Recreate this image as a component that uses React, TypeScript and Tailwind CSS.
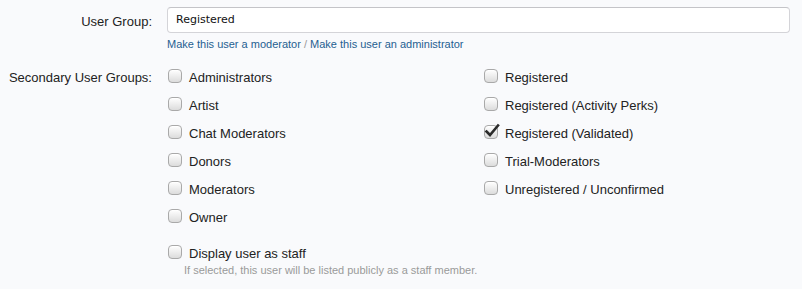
const leftGroups = ['Administrators', 'Artist', 'Chat Moderators', 'Donors', 'Moderators', 'Owner']
const rightGroups = [
  { name: 'Registered', checked: false },
  { name: 'Registered (Activity Perks)', checked: false },
  { name: 'Registered (Validated)', checked: true },
  { name: 'Trial-Moderators', checked: false },
  { name: 'Unregistered / Unconfirmed', checked: false },
]

const Box = ({ checked = false }: { checked?: boolean }) => (
  <span className="relative inline-block w-[14px] h-[14px] shrink-0 -mt-[3px] rounded-[4px] border border-[#a9a9a9] bg-gradient-to-b from-white to-[#dcdcdc] shadow-[inset_0_1px_0_#fff]">
    {checked && (
      <svg className="absolute -left-[1px] -top-[3px]" width="16" height="16" viewBox="0 0 16 16">
        <path d="M2.5 8.5 L6 12 L14 2.5" fill="none" stroke="#2b2b2b" strokeWidth="2.6" strokeLinecap="square" />
      </svg>
    )}
  </span>
)

const Check = ({ label, checked = false }: { label: string; checked?: boolean }) => (
  <label className="flex items-center h-[28px] gap-[7px] text-[13px] text-[#222]">
    <Box checked={checked} />
    <span className="leading-none">{label}</span>
  </label>
)

export default function App() {
  return (
    <div className="w-full h-[289px] bg-[#f9fafc] pt-[7px] font-['Liberation_Sans',Arial,sans-serif] text-[13px] text-[#222]">
      {/* User group */}
      <div className="flex">
        <div className="w-[152px] text-right pt-[5px]">User Group:</div>
        <div className="ml-[15px]">
          <div className="w-[623px] h-[26px] flex items-center px-[8px] bg-white border border-[#d4d4d8] border-t-[#c4c4c8] rounded-[4px] font-['DejaVu_Sans',sans-serif] text-[11px] text-[#111]">
            Registered
          </div>
          <div className="mt-[4px] text-[11px] text-[#1f5f91] leading-[14px]">
            Make this user a moderator <span className="text-[#999]">/</span> Make this user an administrator
          </div>
        </div>
      </div>

      {/* Secondary groups */}
      <div className="flex mt-[12px]">
        <div className="w-[152px] text-right pt-[5px]">Secondary User Groups:</div>
        <div className="ml-[16px]">
          <div className="grid grid-cols-[316px_300px]">
            <div className="flex flex-col">
              {leftGroups.map((g) => (
                <Check key={g} label={g} />
              ))}
            </div>
            <div className="flex flex-col">
              {rightGroups.map((g) => (
                <Check key={g.name} label={g.name} checked={g.checked} />
              ))}
            </div>
          </div>

          <div className="mt-[8px]">
            <Check label="Display user as staff" />
            <div className="-mt-[5px] pl-[16px] text-[11px] text-[#9a9a9a]">
              If selected, this user will be listed publicly as a staff member.
            </div>
          </div>
        </div>
      </div>
    </div>
  )
}
